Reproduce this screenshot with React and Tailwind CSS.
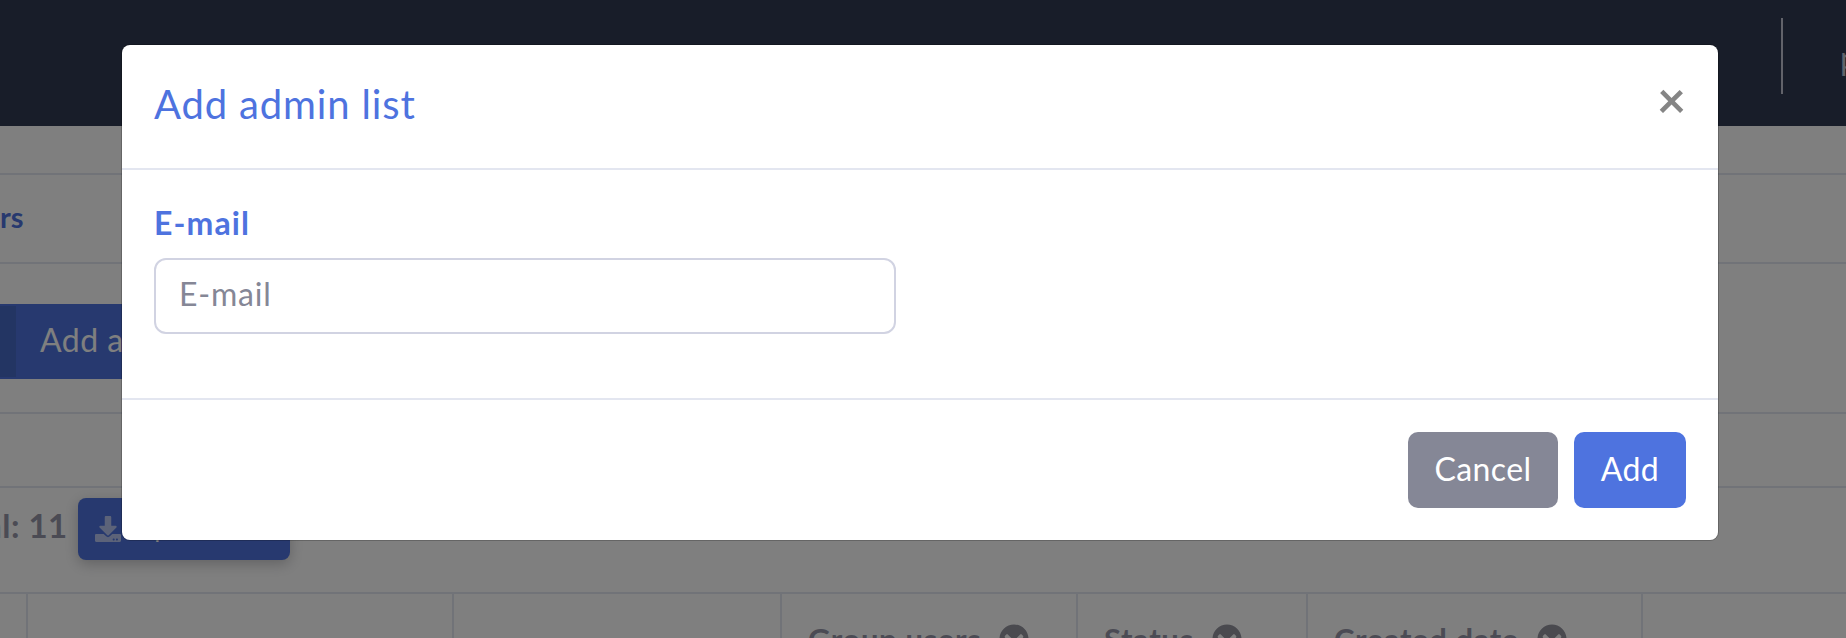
import { FaChevronCircleDown, FaDownload } from 'react-icons/fa';

const FONT = "font-['Lato','Noto_Sans',sans-serif]";

const COLUMNS = [
    { label: '' },
    { label: '' },
    { label: '' },
    { label: 'Group users', sort: true },
    { label: 'Status', sort: true },
    { label: 'Created date', sort: true },
    { label: '' },
];

function HeaderCell({ column }) {
    return (
        <div className="flex items-start gap-[18px] border-r-2 border-[#e3e6f0] pl-[26px] pt-[26px] last:border-r-0">
            {column.label && (
                <span className="text-[31px] leading-[38px] font-bold tracking-[0.6px] whitespace-nowrap text-[#9696a8]">{column.label}</span>
            )}
            {column.sort && <FaChevronCircleDown className="mt-[4px] h-[30px] w-[30px] shrink-0 text-[#94949f]" />}
        </div>
    );
}

function PageBehind() {
    return (
        <div className="flex h-[638px] flex-col overflow-hidden bg-white">
            <header className="flex h-[126px] shrink-0 items-start justify-end bg-[#303a52]">
                <div className="mt-[18px] h-[76px] w-[2px] bg-[#c4c6d4]" />
                <span className="mt-[38px] ml-[57px] w-[6px] overflow-hidden text-[32px] leading-[40px] text-[#c4c6d4]">p</span>
            </header>
            <div className="h-[49px] shrink-0 border-b-2 border-[#e3e6f0]" />
            <div className="flex h-[89px] shrink-0 items-center border-b-2 border-[#e3e6f0] pb-[4px]">
                <span className="text-[29px] font-bold text-[#4e73df]">rs</span>
            </div>
            <div className="h-[150px] shrink-0 border-b-2 border-[#e3e6f0] pt-[40px]">
                <div className="flex h-[75px] w-[400px] items-center bg-[#4e73df] py-[2px]">
                    <div className="h-full w-[16px] bg-[#466ac6]" />
                    <span className="mb-[4px] ml-[24px] text-[32px] tracking-[0.5px] whitespace-nowrap text-white">Add admin</span>
                </div>
            </div>
            <div className="h-[74px] shrink-0 border-b-2 border-[#e3e6f0]" />
            <div className="flex h-[106px] shrink-0 items-start gap-[10px] border-b-2 border-[#e3e6f0] pt-[10px]">
                <span className="mt-[7px] -ml-[15px] text-[33px] leading-[40px] font-bold tracking-[0.5px] text-[#9696a8]">al: 11</span>
                <div className="flex h-[62px] w-[212px] items-center gap-[8px] rounded-lg bg-[#4e73df] pl-[17px] shadow-[0_4px_14px_rgba(58,59,69,0.3)]">
                    <FaDownload className="h-[26px] w-[26px] text-white/60" />
                    <span className="text-[24px] text-white">Export</span>
                </div>
            </div>
            <div className="grid flex-1 grid-cols-[28px_426px_328px_296px_230px_335px_203px]">
                {COLUMNS.map((column, i) => (
                    <HeaderCell key={i} column={column} />
                ))}
            </div>
        </div>
    );
}

function AddAdminModal() {
    return (
        <div className="absolute inset-0 bg-black/50 pt-[44px] pl-[121px]">
            <div className="w-[1598px] overflow-hidden rounded-[9px] border border-black/20 bg-clip-padding">
                <div className="flex h-[125px] items-center justify-between border-b-2 border-[#e3e6f0] bg-white pr-[32px] pl-[32px]">
                    <h2 className="-mt-[6px] text-[40px] leading-none tracking-[0.85px] text-[#4e73df]">Add admin list</h2>
                    <span className="-mt-[16px] text-[50px] leading-none font-bold text-[#858585]">×</span>
                </div>
                <div className="h-[228px] bg-white px-[32px] pt-[33px]">
                    <label className="block text-[32px] leading-[40px] font-bold tracking-[1.1px] text-[#4e73df]">E-mail</label>
                    <input
                        placeholder="E-mail"
                        className="mt-[15px] block h-[76px] w-[742px] rounded-xl border-2 border-[#d1d3e2] bg-white pr-[24px] pb-[6px] pl-[23px] text-[32px] tracking-[0.8px] outline-none placeholder:text-[#858796]"
                    />
                </div>
                <div className="flex h-[142px] items-start justify-end gap-[16px] border-t-2 border-[#e3e6f0] bg-white pt-[32px] pr-[32px]">
                    <button className="h-[76px] w-[150px] rounded-[10px] bg-[#858796] pb-[2px] text-[32px] tracking-[0.4px] text-white">Cancel</button>
                    <button className="h-[76px] w-[112px] rounded-[10px] bg-[#4e73df] pb-[2px] text-[32px] tracking-[0.4px] text-white">Add</button>
                </div>
            </div>
        </div>
    );
}

export default function App() {
    return (
        <div className={`relative h-[638px] overflow-hidden ${FONT}`}>
            <PageBehind />
            <AddAdminModal />
        </div>
    );
}
